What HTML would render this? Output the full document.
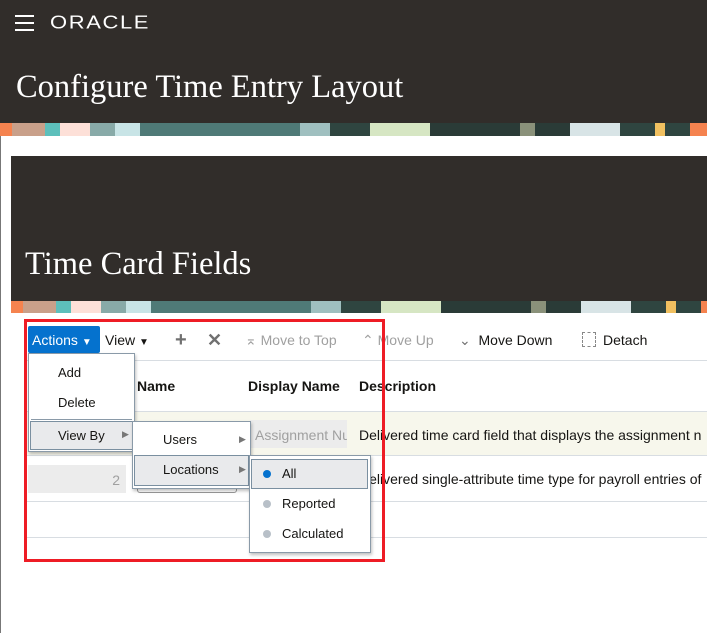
<!DOCTYPE html>
<html><head><meta charset="utf-8"><style>
*{margin:0;padding:0;box-sizing:border-box}
body{width:707px;height:633px;overflow:hidden;background:#fff;font-family:"Liberation Sans",sans-serif;position:relative;font-size:14px;color:#161513}
.a{position:absolute}
.serif{font-family:"Liberation Serif",serif;color:#fff}
.band{background:linear-gradient(90deg,#f5834f 0 12px,#c9a08a 12px 45px,#5dbfbb 45px 60px,#fde0d8 60px 90px,#88aaa8 90px 115px,#c8e4e6 115px 140px,#4f7a77 140px 300px,#9fbfbf 300px 330px,#2f4540 330px 370px,#d6e6c3 370px 430px,#2a3b37 430px 520px,#8a917a 520px 535px,#2a3b37 535px 570px,#d8e4e6 570px 620px,#2f4540 620px 655px,#f0c060 655px 665px,#2f4540 665px 690px,#f5834f 690px)}
.menu{background:#fff;border:1px solid #8a9aa8;box-shadow:1px 2px 3px rgba(0,0,0,.25)}
.hl{background:#e9eaec;border:1px solid #7a8fa0}
.hr{height:1px;background:#d8dde2}
</style></head><body>
<div class="a" style="left:0;top:0;width:707px;height:123px;background:#312d2a"></div>
<div class="a" style="left:15px;top:15px;width:19px;height:2px;background:#fff"></div>
<div class="a" style="left:15px;top:22px;width:19px;height:2px;background:#fff"></div>
<div class="a" style="left:15px;top:29px;width:19px;height:2px;background:#fff"></div>
<div class="a" style="left:50px;top:12px;color:#fff;font-size:22px;letter-spacing:1.6px;transform:scaleY(.82);transform-origin:left top">ORACLE</div>
<div class="a serif" style="left:16px;top:69px;font-size:32.5px">Configure Time Entry Layout</div>
<div class="a band" style="left:0;top:123px;width:707px;height:13px"></div>
<div class="a" style="left:0;top:136px;width:1px;height:497px;background:#777"></div>
<div class="a" style="left:11px;top:156px;width:696px;height:145px;background:#312d2a"></div>
<div class="a serif" style="left:25px;top:246px;font-size:32.5px">Time Card Fields</div>
<div class="a band" style="left:11px;top:301px;width:696px;height:12px"></div>

<!-- toolbar -->
<div class="a" style="left:28px;top:326px;width:72px;height:27px;background:#0572ce;border-radius:2px;color:#fff;padding:6px 0 0 4px">Actions <span style="font-size:10px">▼</span></div>
<div class="a" style="left:105px;top:332px">View <span style="font-size:10px">▼</span></div>
<div class="a" style="left:175px;top:332px;color:#707070;font-size:20px;line-height:16px;font-weight:bold">+</div>
<div class="a" style="left:207px;top:331px;color:#707070;font-size:18px;line-height:18px;font-weight:bold">✕</div>
<div class="a" style="left:245px;top:332px;color:#a0a0a0">⌅ Move to Top</div>
<div class="a" style="left:362px;top:332px;color:#a0a0a0">⌃ Move Up</div>
<div class="a" style="left:459px;top:332px"><span style="color:#707070">⌄</span>&nbsp; Move Down</div>
<div class="a" style="left:582px;top:332px;width:14px;height:15px;border:1px dashed #888"></div>
<div class="a" style="left:603px;top:332px">Detach</div>
<div class="a hr" style="left:24px;top:360px;width:683px"></div>
<div class="a" style="left:137px;top:378px;font-weight:bold">Name</div>
<div class="a" style="left:248px;top:378px;font-weight:bold">Display Name</div>
<div class="a" style="left:359px;top:378px;font-weight:bold">Description</div>
<div class="a hr" style="left:24px;top:411px;width:683px"></div>
<div class="a" style="left:24px;top:412px;width:683px;height:43px;background:#f7f7ec"></div>
<div class="a" style="left:250px;top:420px;width:97px;height:28px;background:#ececec;color:#a0a0a0;padding:7px 0 0 5px;overflow:hidden;white-space:nowrap">Assignment Nu</div>
<div class="a" style="left:359px;top:427px;white-space:nowrap">Delivered time card field that displays the assignment n</div>
<div class="a hr" style="left:24px;top:455px;width:683px"></div>
<div class="a" style="left:28px;top:465px;width:98px;height:28px;background:#ececec;color:#a0a0a0;text-align:right;padding:7px 6px 0 0">2</div>
<div class="a" style="left:137px;top:480px;width:100px;height:13px;border:1px solid #999;border-top:none;border-radius:0 0 3px 3px"></div>
<div class="a" style="left:359px;top:471px;white-space:nowrap;width:348px;overflow:hidden">Delivered single-attribute time type for payroll entries of</div>
<div class="a hr" style="left:24px;top:501px;width:683px"></div>
<div class="a hr" style="left:24px;top:537px;width:683px"></div>

<!-- menus -->
<div class="a menu" style="left:28px;top:353px;width:107px;height:99px"></div>
<div class="a" style="left:58px;top:365px;font-size:13px">Add</div>
<div class="a" style="left:58px;top:395px;font-size:13px">Delete</div>
<div class="a" style="left:31px;top:419px;width:101px;height:1px;background:#8a9aa8"></div>
<div class="a hl" style="left:30px;top:421px;width:104px;height:29px"></div>
<div class="a" style="left:58px;top:428px;font-size:13px">View By</div>
<div class="a" style="left:122px;top:429px;font-size:9px;color:#777">▶</div>

<div class="a menu" style="left:132px;top:421px;width:119px;height:68px"></div>
<div class="a" style="left:163px;top:432px;font-size:13px">Users</div>
<div class="a" style="left:239px;top:434px;font-size:9px;color:#777">▶</div>
<div class="a hl" style="left:134px;top:455px;width:115px;height:31px"></div>
<div class="a" style="left:163px;top:462px;font-size:13px">Locations</div>
<div class="a" style="left:239px;top:464px;font-size:9px;color:#777">▶</div>

<div class="a menu" style="left:249px;top:455px;width:122px;height:98px"></div>
<div class="a hl" style="left:251px;top:459px;width:117px;height:30px"></div>
<div class="a" style="left:263px;top:470px;width:8px;height:8px;border-radius:50%;background:#0572ce"></div>
<div class="a" style="left:282px;top:466px;font-size:13px">All</div>
<div class="a" style="left:263px;top:500px;width:8px;height:8px;border-radius:50%;background:#b8c0c8"></div>
<div class="a" style="left:282px;top:496px;font-size:13px">Reported</div>
<div class="a" style="left:263px;top:530px;width:8px;height:8px;border-radius:50%;background:#b8c0c8"></div>
<div class="a" style="left:282px;top:526px;font-size:13px">Calculated</div>

<div class="a" style="left:24px;top:319px;width:361px;height:243px;border:3px solid #ee1c25"></div>
</body></html>
